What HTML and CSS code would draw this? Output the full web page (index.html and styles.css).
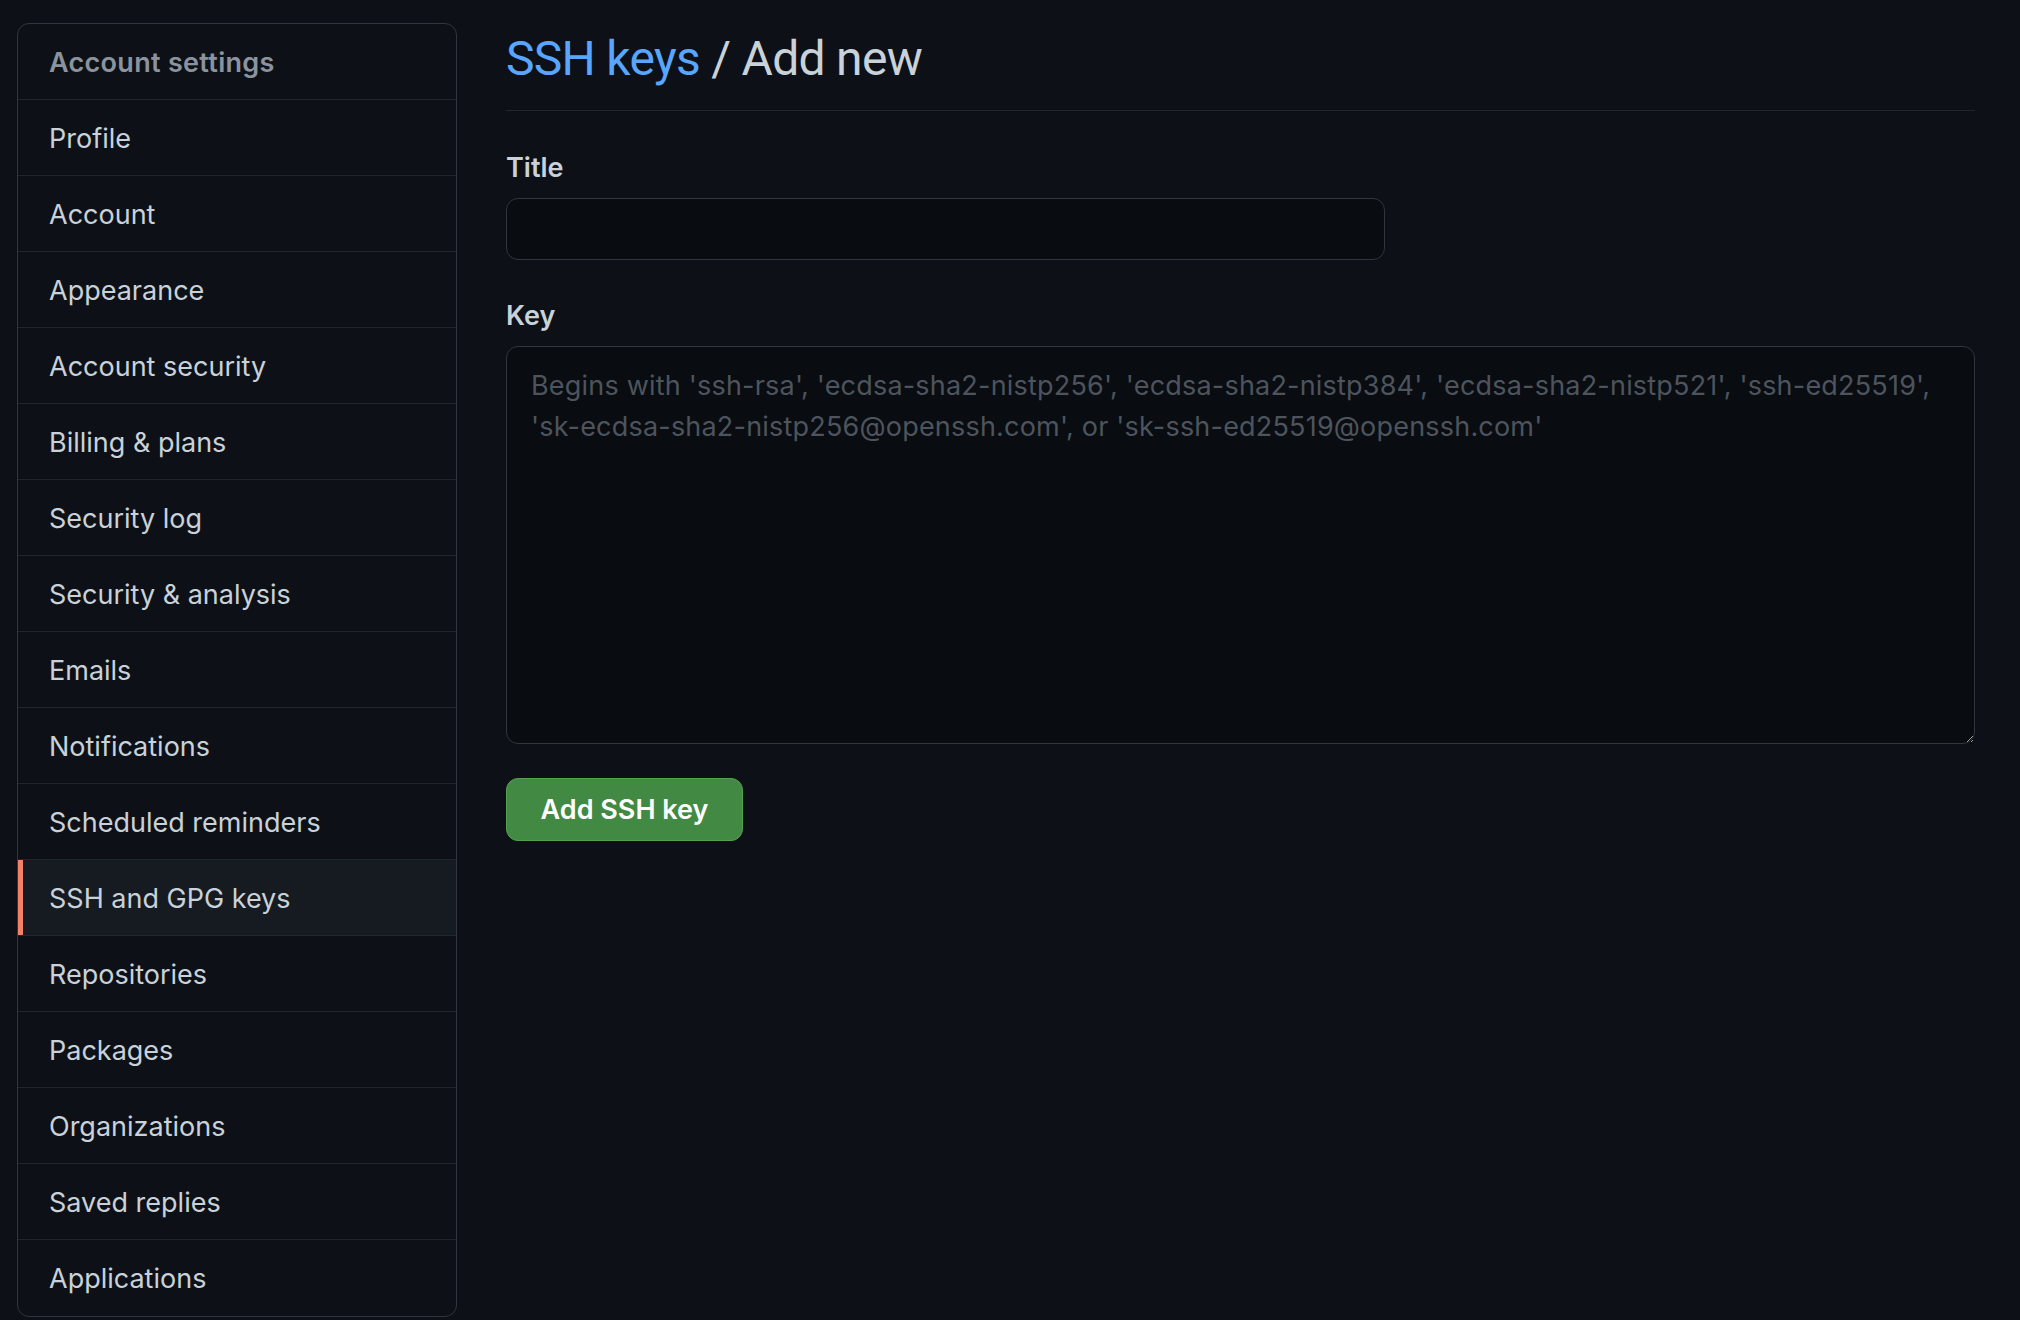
FILE: index.html
```html
<!DOCTYPE html>
<html lang="en">

<head>
    <meta charset="UTF-8">
    <meta name="viewport" content="width=device-width, initial-scale=1.0">
    <title>Add new SSH key</title>
    <link rel="stylesheet" href="styles.css">
</head>

<body>
    <div class="layout">
        <nav class="menu">
            <h3 class="menu-heading">Account settings</h3>
            <a href="#" class="menu-item">Profile</a>
            <a href="#" class="menu-item">Account</a>
            <a href="#" class="menu-item">Appearance</a>
            <a href="#" class="menu-item">Account security</a>
            <a href="#" class="menu-item">Billing &amp; plans</a>
            <a href="#" class="menu-item">Security log</a>
            <a href="#" class="menu-item">Security &amp; analysis</a>
            <a href="#" class="menu-item">Emails</a>
            <a href="#" class="menu-item">Notifications</a>
            <a href="#" class="menu-item">Scheduled reminders</a>
            <a href="#" class="menu-item selected">SSH and GPG keys</a>
            <a href="#" class="menu-item">Repositories</a>
            <a href="#" class="menu-item">Packages</a>
            <a href="#" class="menu-item">Organizations</a>
            <a href="#" class="menu-item">Saved replies</a>
            <a href="#" class="menu-item">Applications</a>
        </nav>

        <main class="content">
            <div class="subhead">
                <h2 class="subhead-heading"><a href="#">SSH keys</a> / Add new</h2>
            </div>

            <form class="key-form">
                <div class="form-group">
                    <label for="key_title">Title</label>
                    <input type="text" id="key_title" class="form-control title-input">
                </div>

                <div class="form-group">
                    <label for="key_key">Key</label>
                    <textarea id="key_key" class="form-control key-input" placeholder="Begins with 'ssh-rsa', 'ecdsa-sha2-nistp256', 'ecdsa-sha2-nistp384', 'ecdsa-sha2-nistp521', 'ssh-ed25519',&#10;'sk-ecdsa-sha2-nistp256@openssh.com', or 'sk-ssh-ed25519@openssh.com'"></textarea>
                </div>

                <button type="submit" class="btn-primary">Add SSH key</button>
            </form>
        </main>
    </div>
</body>

</html>
```

FILE: styles.css
```css
body {
    margin: 0;
    padding: 0;
    background-color: #0d1117;
    color: #c9d1d9;
    font-family: Inter, "Noto Sans", sans-serif;
}

.layout {
    display: flex;
    align-items: flex-start;
    gap: 49px;
    padding: 23px 45px 0 17px;
}

/* left settings menu */
.menu {
    flex-shrink: 0;
    width: 440px;
    box-sizing: border-box;
    border: 1px solid #30363d;
    border-radius: 12px;
    overflow: hidden;
}

.menu-heading {
    margin: 0;
    display: flex;
    align-items: center;
    padding: 1px 0 0 31px;
    box-sizing: border-box;
    height: 76px;
    font-size: 27px;
    font-weight: 600;
    letter-spacing: 0.3px;
    color: #8b949e;
    border-bottom: 1px solid #21262d;
}

.menu-item {
    display: flex;
    align-items: center;
    height: 76px;
    box-sizing: border-box;
    padding: 1px 0 0 31px;
    font-size: 27px;
    color: #c9d1d9;
    text-decoration: none;
    border-bottom: 1px solid #21262d;
    position: relative;
}

.menu-item:last-child {
    border-bottom: none;
}

.menu-item.selected {
    background-color: #161b22;
}

.menu-item.selected::before {
    content: "";
    position: absolute;
    left: 0;
    top: 0;
    bottom: 0;
    width: 5px;
    background-color: #f78166;
}

/* main column */
.content {
    flex: 1;
    min-width: 0;
}

.subhead {
    border-bottom: 1px solid #21262d;
    padding-bottom: 21px;
    margin-top: 6px;
}

.subhead-heading {
    margin: 0;
    font-family: Roboto, "Noto Sans", sans-serif;
    font-size: 48px;
    line-height: 60px;
    font-weight: 400;
    letter-spacing: -0.7px;
    color: #c9d1d9;
}

.subhead-heading a {
    color: #58a6ff;
    text-decoration: none;
}

.key-form {
    padding-top: 37px;
}

.form-group {
    margin-bottom: 36px;
}

.form-group label {
    display: block;
    font-size: 27px;
    line-height: 40px;
    font-weight: 600;
    color: #c9d1d9;
    margin-bottom: 10px;
}

.form-control {
    display: block;
    box-sizing: border-box;
    background-color: #090c10;
    border: 1px solid #30363d;
    border-radius: 12px;
    color: #c9d1d9;
    outline: none;
}

.title-input {
    width: 879px;
    height: 62px;
    padding: 0 16px;
    font-size: 26px;
}

.key-input {
    width: 100%;
    height: 398px;
    padding: 18px 16px 18px 24px;
    font-family: Inter, "Noto Sans", sans-serif;
    font-size: 27px;
    line-height: 41px;
    letter-spacing: 0.2px;
    resize: vertical;
}

.key-input::placeholder {
    color: #4d545d;
}

.btn-primary {
    margin-top: -2px;
    width: 237px;
    height: 63px;
    background-color: #428a43;
    color: #ffffff;
    border: 1px solid #52a14f;
    border-radius: 12px;
    font-family: Inter, "Noto Sans", sans-serif;
    font-size: 27px;
    font-weight: 600;
    cursor: pointer;
}
```
